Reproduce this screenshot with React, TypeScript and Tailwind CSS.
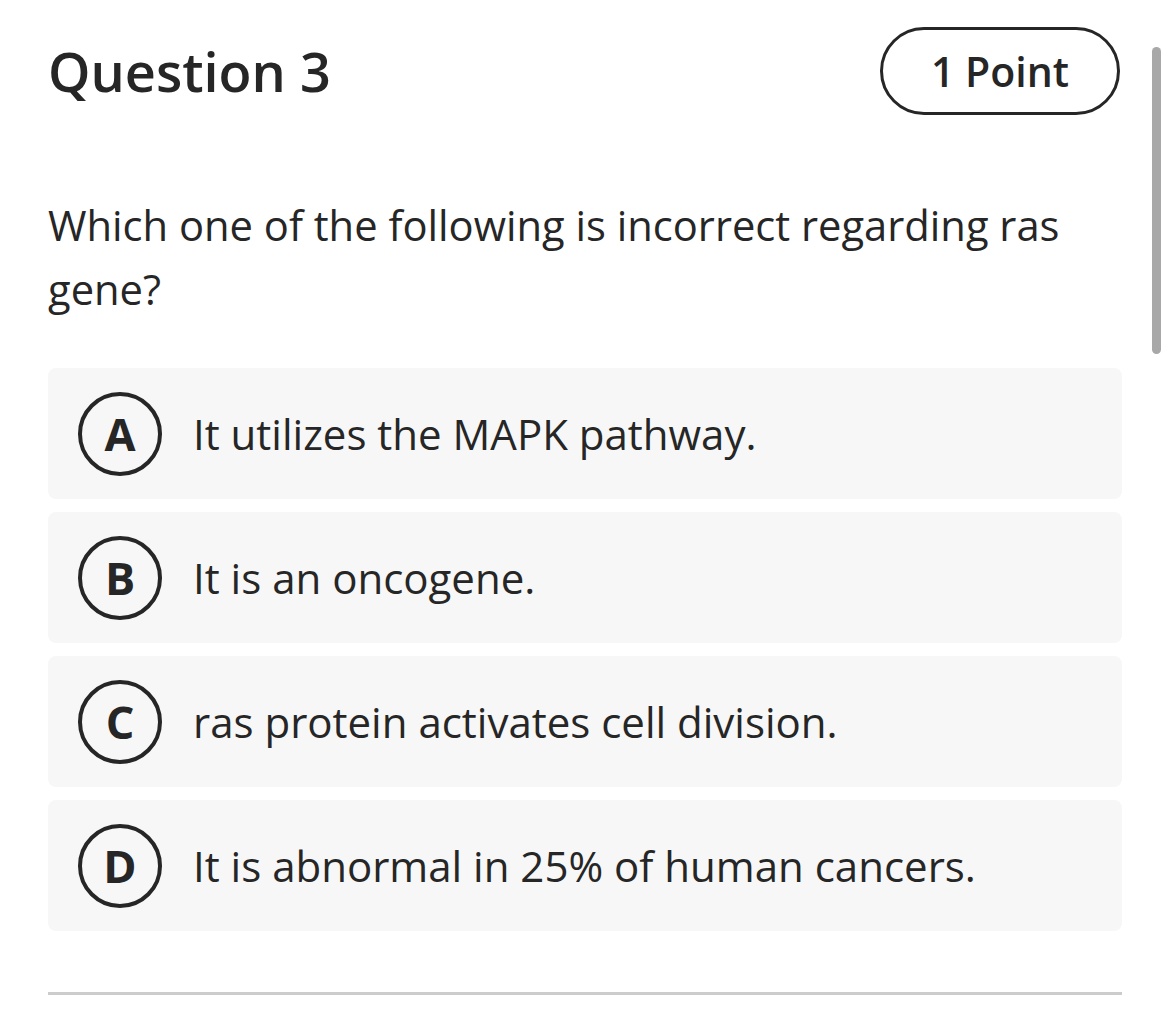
import React from "react";

const options = [
  { letter: "A", text: "It utilizes the MAPK pathway." },
  { letter: "B", text: "It is an oncogene." },
  { letter: "C", text: "ras protein activates cell division." },
  { letter: "D", text: "It is abnormal in 25% of human cancers." },
];

export default function App() {
  return (
    <div
      className="relative w-[1170px] h-[1019px] bg-white overflow-hidden text-[#262626]"
      style={{ fontFamily: '"Open Sans", "Liberation Sans", sans-serif' }}
    >
      <div className="absolute left-[1152px] top-[47px] w-[9px] h-[307px] rounded-full bg-[#a8a8a8]" />
      <div className="ml-[48px] w-[1074px] pt-[27px]">
        <div className="flex items-center justify-between">
          <h1 className="text-[54px] font-semibold leading-none">Question 3</h1>
          <div className="mr-[2px] w-[240px] h-[88px] rounded-full border-[3px] border-[#262626] flex items-center justify-center text-[41px] font-semibold leading-none">
            1 Point
          </div>
        </div>
        <p className="mt-[78px] text-[41.7px] leading-[64px]">
          Which one of the following is incorrect regarding ras gene?
        </p>
        <div className="mt-[47px] flex flex-col gap-[13px]">
          {options.map((o) => (
            <div
              key={o.letter}
              className="h-[131px] rounded-[8px] bg-[#f7f7f7] flex items-center pl-[30px]"
            >
              <div className="w-[84px] h-[84px] rounded-full border-[4px] border-[#262626] flex items-center justify-center text-[45px] font-bold leading-none shrink-0">
                {o.letter}
              </div>
              <span className="ml-[31px] text-[42px] leading-none">{o.text}</span>
            </div>
          ))}
        </div>
        <div className="mt-[61px] h-[3px] bg-[#cccccc]" />
      </div>
    </div>
  );
}
